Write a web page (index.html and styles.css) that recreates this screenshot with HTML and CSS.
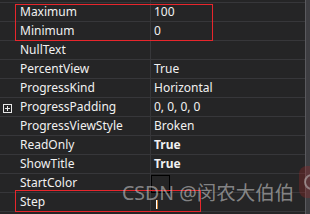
FILE: index.html
```html
<!DOCTYPE html>
<html lang="en">
<head>
    <meta charset="UTF-8">
    <title>Properties</title>
    <link rel="stylesheet" href="styles.css">
</head>
<body>
    <div class="panel">
        <div class="grid">
            <div class="row sliver"><div class="gutter"></div><div class="name"></div><div class="value"></div></div>
            <div class="row"><div class="gutter"></div><div class="name">Maximum</div><div class="value">100</div></div>
            <div class="row"><div class="gutter"></div><div class="name">Minimum</div><div class="value">0</div></div>
            <div class="row"><div class="gutter"></div><div class="name">NullText</div><div class="value"></div></div>
            <div class="row"><div class="gutter"></div><div class="name">PercentView</div><div class="value">True</div></div>
            <div class="row"><div class="gutter"></div><div class="name">ProgressKind</div><div class="value">Horizontal</div></div>
            <div class="row"><div class="gutter"><span class="expander"></span></div><div class="name">ProgressPadding</div><div class="value">0, 0, 0, 0</div></div>
            <div class="row"><div class="gutter"></div><div class="name">ProgressViewStyle</div><div class="value">Broken</div></div>
            <div class="row"><div class="gutter"></div><div class="name">ReadOnly</div><div class="value bold">True</div></div>
            <div class="row"><div class="gutter"></div><div class="name">ShowTitle</div><div class="value bold">True</div></div>
            <div class="row"><div class="gutter"></div><div class="name">StartColor</div><div class="value"><span class="swatch"></span></div></div>
            <div class="row"><div class="gutter"></div><div class="name">Step</div><div class="value"><span class="caret"></span></div></div>
        </div>
        <div class="scrollbar"></div>

        <!-- annotation boxes -->
        <div class="mark mark-range"></div>
        <div class="mark mark-step"></div>

        <div class="watermark">CSDN @闵农大伯伯</div>
        <svg class="logo" width="30" height="32" viewBox="0 0 30 32">
            <rect x="0" y="0" width="30" height="32" rx="8" fill="rgba(150,40,40,0.35)"/>
            <path d="M13 9 A7 7 0 1 0 13 23" fill="none" stroke="rgba(200,200,200,0.5)" stroke-width="2"/>
        </svg>
    </div>
</body>
</html>
```

FILE: styles.css
```css
body {
    margin: 0;
    padding: 0;
    background-color: #252526;
    font-family: "Noto Sans", "Noto Sans CJK SC", sans-serif;
    font-size: 12px;
    color: #f1f1f1;
}

.panel {
    position: relative;
    width: 310px;
    height: 214px;
    overflow: hidden;
    display: flex;
}

.grid {
    flex: 1;
    display: flex;
    flex-direction: column;
}

.row {
    display: flex;
    height: 18px;
    border-bottom: 1px solid #37373a;
    flex-shrink: 0;
}

.row.sliver {
    height: 2px;
}

.gutter {
    width: 16px;
    display: flex;
    align-items: center;
    justify-content: center;
}

.name {
    width: 130px;
    padding-left: 4px;
    line-height: 18px;
    border-right: 1px solid #37373a;
    white-space: nowrap;
}

.value {
    flex: 1;
    padding-left: 3px;
    line-height: 18px;
    white-space: nowrap;
    position: relative;
}

.bold {
    font-weight: bold;
}

.expander {
    width: 7px;
    height: 7px;
    border: 1px solid #e8e8e8;
    position: relative;
    margin-left: -2px;
    margin-top: 3px;
}

.expander::before,
.expander::after {
    content: "";
    position: absolute;
    background-color: #e8e8e8;
}

.expander::before {
    left: 1px;
    top: 3px;
    width: 5px;
    height: 1px;
}

.expander::after {
    left: 3px;
    top: 1px;
    width: 1px;
    height: 5px;
}

.swatch {
    display: block;
    width: 19px;
    height: 18px;
    margin-left: -3px;
    margin-top: 1px;
    border: 1px solid #000;
    box-sizing: border-box;
}

.caret {
    position: absolute;
    left: 5px;
    top: 7px;
    width: 1px;
    height: 9px;
    background-color: #fff;
    box-shadow: 1px 0 0 #d08030;
}

.scrollbar {
    width: 4px;
    background-color: #3e3e42;
    border-left: 1px solid #5a5a5e;
}

.mark {
    position: absolute;
    border: 1px solid #e8262c;
}

.mark-range {
    left: 15px;
    top: 4px;
    width: 196px;
    height: 35px;
}

.mark-step {
    left: 15px;
    top: 190px;
    width: 184px;
    height: 20px;
}

.watermark {
    position: absolute;
    left: 122px;
    top: 180px;
    font-size: 19.5px;
    line-height: 26px;
    color: rgba(195, 195, 195, 0.62);
    white-space: nowrap;
}

.logo {
    position: absolute;
    left: 299px;
    top: 166px;
}
```
